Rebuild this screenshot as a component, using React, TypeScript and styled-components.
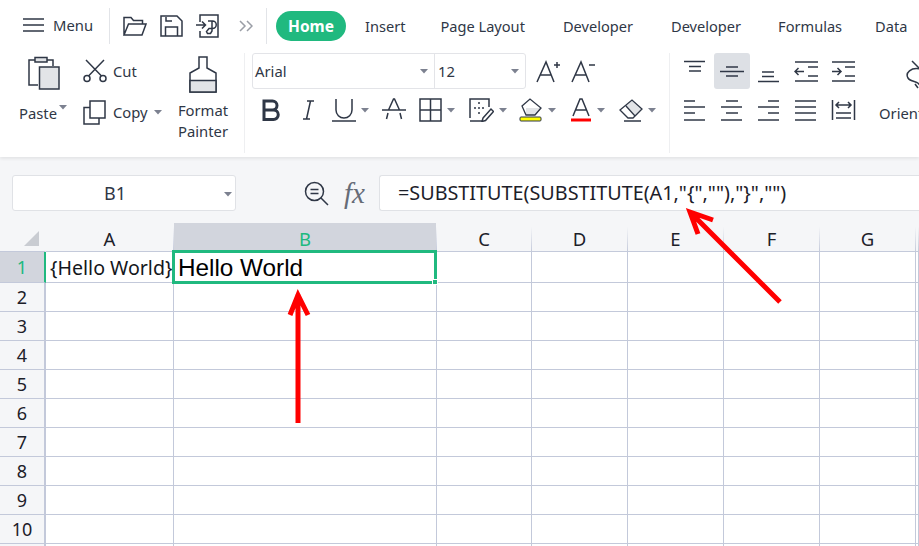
import React from 'react'
import styled, { createGlobalStyle } from 'styled-components'

const ink = '#2f3746'
const green = '#20b97f'
const gridLine = '#c3c9da'

const GlobalStyle = createGlobalStyle`
  html, body {
    margin: 0;
    padding: 0;
    width: 919px;
    height: 546px;
    overflow: hidden;
    background: #fff;
    font-family: "Noto Sans", "Open Sans", sans-serif;
    color: ${ink};
  }
`

const Page = styled.div`
  position: relative;
  width: 919px;
  height: 546px;
  overflow: hidden;
  background: #f5f6f8;
`

/* top menu row */
const TopBar = styled.div`
  display: flex;
  align-items: center;
  height: 53px;
  padding-bottom: 2px;
  box-sizing: border-box;
  background: #fff;
  white-space: nowrap;
`

const MenuButton = styled.div`
  display: flex;
  align-items: center;
  gap: 9px;
  width: 86px;
  padding: 0 0 1px 23px;
  font-size: 14.8px;
`

const BarDivider = styled.div`
  width: 1px;
  height: 36px;
  background: #e2e4e8;
`

const QuickTools = styled.div`
  display: flex;
  align-items: center;
  gap: 13px;
  width: 143px;
  padding-left: 13px;
`

const MoreIcon = styled.div`
  margin-left: 6px;
`

const HomeTab = styled.div`
  display: flex;
  align-items: center;
  justify-content: center;
  width: 70px;
  height: 30px;
  margin-left: 9px;
  border-radius: 15px;
  background: ${green};
  color: #fff;
  font-weight: 700;
  font-size: 15.5px;
`

const Tab = styled.div<{ $gap: number }>`
  margin-left: ${({ $gap }) => $gap}px;
  font-size: 14.6px;
`

/* ribbon */
const Ribbon = styled.div`
  display: flex;
  height: 104px;
  background: #fff;
  box-shadow: 0 2px 3px rgba(0, 0, 0, 0.07);
  overflow: hidden;
  white-space: nowrap;
  font-size: 14.8px;
  position: relative;
`

const ClipboardGroup = styled.div`
  display: grid;
  grid-template-columns: 83px 93px 54px;
  width: 244px;
  height: 100px;
  flex: none;
  border-right: 1px solid #eeeff1;
`

const PasteColumn = styled.div`
  display: flex;
  flex-direction: column;
  padding: 3px 0 0 19px;
`

const PasteIconWrap = styled.div`
  height: 44px;
  padding-left: 8px;
`

const LabelRow = styled.div`
  display: flex;
  align-items: center;
  gap: 4px;
  height: 26px;
`

const RaisedCaret = styled.div`
  margin: -11px 0 0 -2px;
`

const SmallColumn = styled.div`
  display: flex;
  flex-direction: column;
  gap: 15px;
  padding-top: 5px;
`

const SmallRow = styled.div`
  display: flex;
  align-items: center;
  gap: 6px;
  height: 26px;
`

const SmallIconBox = styled.div`
  width: 24px;
  height: 26px;
  display: flex;
  align-items: center;
`

const PainterColumn = styled.div`
  display: flex;
  flex-direction: column;
  align-items: center;
  padding-top: 3px;
  line-height: 21px;
  text-align: center;
`

const PainterLabel = styled.div`
  margin-top: 7px;
`

const FontGroup = styled.div`
  width: 417px;
  height: 100px;
  flex: none;
  margin-left: 7px;
  border-right: 1px solid #eeeff1;
`

const FontTop = styled.div`
  display: flex;
  align-items: center;
  height: 36px;
`

const FontSelects = styled.div`
  display: flex;
  width: 274px;
  height: 36px;
  box-sizing: border-box;
  border: 1px solid #e3e4e8;
  border-radius: 3px;
`

const SelectPart = styled.div<{ $width: number; $divided?: boolean }>`
  display: flex;
  align-items: center;
  justify-content: space-between;
  box-sizing: border-box;
  width: ${({ $width }) => $width}px;
  padding: 0 6px 0 ${({ $divided }) => ($divided ? 3 : 2)}px;
  border-left: ${({ $divided }) => ($divided ? '1px solid #e3e4e8' : 'none')};
`

const SizeButtons = styled.div`
  display: flex;
  align-items: center;
  gap: 11px;
  margin-left: 10px;
`

const FontTools = styled.div`
  display: flex;
  align-items: center;
  height: 28px;
  margin-top: 7px;
`

const Tool = styled.div<{ $left: number }>`
  display: flex;
  align-items: center;
  gap: 5px;
  margin-left: ${({ $left }) => $left}px;
`

const AlignGroup = styled.div`
  display: grid;
  grid-template-columns: repeat(5, 36px);
  grid-auto-rows: 36px;
  column-gap: 1px;
  row-gap: 3px;
  flex: none;
  width: 184px;
  margin-left: 7px;
`

const AlignCell = styled.div<{ $active?: boolean }>`
  display: flex;
  align-items: center;
  justify-content: center;
  border-radius: 3px;
  background: ${({ $active }) => ($active ? '#dde0e5' : 'transparent')};
`

const OrientColumn = styled.div`
  display: flex;
  flex-direction: column;
  flex: none;
  padding: 5px 0 0 18px;
`

const OrientIcon = styled.div`
  height: 42px;
  padding-left: 26px;
`

/* formula bar */
const FormulaBar = styled.div`
  display: flex;
  align-items: center;
  height: 66px;
  padding: 18px 0 12px 12px;
  box-sizing: border-box;
`

const NameBox = styled.div`
  position: relative;
  display: flex;
  align-items: center;
  justify-content: center;
  box-sizing: border-box;
  width: 224px;
  height: 36px;
  padding-right: 18px;
  flex: none;
  background: #fff;
  border: 1px solid #e0e2e6;
  border-radius: 3px;
  font-size: 18px;
`

const NameCaret = styled.div`
  position: absolute;
  right: 3px;
  top: 16px;
`

const FormulaTools = styled.div`
  display: flex;
  align-items: center;
  width: 143px;
  padding-left: 68px;
  box-sizing: border-box;
  flex: none;
`

const FxLabel = styled.span`
  margin-left: 15px;
  font-family: "Liberation Serif", serif;
  font-style: italic;
  font-size: 29px;
  line-height: 30px;
  color: #666c77;
`

const FormulaInput = styled.div`
  flex: 1;
  height: 36px;
  box-sizing: border-box;
  padding-left: 18px;
  background: #fff;
  border: 1px solid #e0e2e6;
  border-right: none;
  border-radius: 3px 0 0 3px;
  font-size: 19.8px;
  line-height: 33px;
  color: #1c2029;
  white-space: nowrap;
`

/* sheet */
const Sheet = styled.div`
  display: grid;
  grid-template-columns: 46px 128px 263px 95px repeat(4, 96px) 1fr;
  grid-template-rows: 29px 31px repeat(9, 29px) 10px;
  background: #fff;
`

const Corner = styled.div`
  background: #f5f6f8;
  display: flex;
  align-items: flex-end;
  justify-content: flex-end;
  padding: 0 6px 5px 0;
  border-right: 1px solid transparent;
  border-bottom: 1px solid ${gridLine};
`

const ColHead = styled.div<{ $selected?: boolean }>`
  display: flex;
  align-items: center;
  justify-content: center;
  box-sizing: border-box;
  font-size: 18.5px;
  padding-top: 3px;
  background: ${({ $selected }) => ($selected ? '#d2d5dd' : '#f5f6f8')};
  color: ${({ $selected }) => ($selected ? green : '#1c2029')};
  border-bottom: 1px solid ${gridLine};
  border-right: 1px solid transparent;
  border-image: linear-gradient(to bottom, #f5f6f8 15%, ${gridLine} 100%) 1;
  border-bottom-style: solid;
`

const RowHead = styled.div<{ $selected?: boolean }>`
  display: flex;
  align-items: center;
  justify-content: center;
  box-sizing: border-box;
  font-size: 18px;
  background: ${({ $selected }) => ($selected ? '#d2d5dd' : '#f5f6f8')};
  color: ${({ $selected }) => ($selected ? green : '#1c2029')};
  border-right: 2px solid ${({ $selected }) => ($selected ? green : gridLine)};
  border-bottom: 1px solid ${gridLine};
`

const Cell = styled.div`
  box-sizing: border-box;
  border-right: 1px solid ${gridLine};
  border-bottom: 1px solid ${gridLine};
  background: #fff;
  overflow: visible;
  white-space: nowrap;
`

const TextCell = styled(Cell)`
  font-size: 19.6px;
  line-height: 32px;
  padding-left: 4px;
  color: #14171c;
`

const SelectedCell = styled.div`
  position: relative;
  box-sizing: border-box;
  margin: -2px 0 -1px -2px;
  border: 3px solid ${green};
  font-family: "Liberation Sans", Arial, sans-serif;
  font-size: 24.3px;
  line-height: 29px;
  padding-left: 3px;
  color: #000;
  background: #fff;
  white-space: nowrap;
`

const FillHandle = styled.div`
  position: absolute;
  right: -4px;
  bottom: -4px;
  width: 4px;
  height: 4px;
  background: ${green};
  border: 1px solid #fff;
`

const ArrowLayer = styled.svg`
  position: absolute;
  left: 0;
  top: 0;
  width: 919px;
  height: 546px;
  pointer-events: none;
`

/* icons */
const Svg = styled.svg`
  display: block;
  flex: none;
  fill: none;
  stroke: ${ink};
  stroke-width: 1.5;
`

const CaretSvg = styled.svg`
  display: block;
  flex: none;
`

const Caret = () => (
  <CaretSvg width="8" height="5" viewBox="0 0 8 5">
    <path d="M0 0h8L4 4.500z" fill="#7c8190" />
  </CaretSvg>
)

const Icon = ({ w, h, children }: { w: number; h: number; children: React.ReactNode }) => (
  <Svg width={w} height={h} viewBox={`0 0 ${w} ${h}`}>
    {children}
  </Svg>
)

const alignRows: { lines: [number, number, number][]; active?: boolean; extra?: string }[] = [
  { lines: [[1, 22, 2.5], [6, 18, 7.5], [6, 18, 12]] },
  { lines: [[0, 24, 12.5], [6, 18, 8], [6, 18, 17]], active: true },
  { lines: [[5, 17, 13], [5, 17, 17.5], [1, 22, 22.5]] },
  { lines: [[1, 24, 3], [14, 24, 8], [14, 24, 17], [1, 24, 22]], extra: 'M1 12.500h9M4.500 9L1 12.500 4.500 16' },
  { lines: [[1, 24, 3], [14, 24, 8], [14, 24, 17], [1, 24, 22]], extra: 'M1 12.500h9M6.500 9L10 12.500 6.500 16' },
  { lines: [[1, 12, 3], [1, 22, 9], [1, 12, 15], [1, 22, 22]] },
  { lines: [[6, 18, 3], [1, 22, 9], [6, 18, 15], [1, 22, 22]] },
  { lines: [[11, 22, 3], [1, 22, 9], [11, 22, 15], [1, 22, 22]] },
  { lines: [[1, 22, 3], [1, 22, 9], [1, 22, 15], [1, 22, 22]] }
]

export default function App() {
  return (
    <Page>
      <GlobalStyle />
      <TopBar>
        <MenuButton>
          <Icon w={21} h={16}>
            <path d="M0 2h21M0 8h21M0 14h21" />
          </Icon>
          Menu
        </MenuButton>
        <BarDivider />
        <QuickTools>
          <Icon w={24} h={22}>
            <path d="M1 20V2.500h7l2.500 3h9V9M1 20h18l4-11H5.500z" />
          </Icon>
          <Icon w={23} h={22}>
            <path d="M1 1h16l5 5v15H1zM5.500 21v-9h12v9M6 2v4h6" />
          </Icon>
          <Icon w={24} h={24}>
            <path d="M4 8V1h18v22H4v-6M0 11h9M6 7.500l3.500 3.500L6 14.500M12 7h4.500a3.300 3.300 0 0 1 0 7.500H13l-2.500 3 1 2h3l1.500-2.500V7" />
          </Icon>
          <MoreIcon>
            <Icon w={14} h={12}>
              <path d="M1 1l5 5-5 5M8 1l5 5-5 5" stroke="#9a9ea6" />
            </Icon>
          </MoreIcon>
        </QuickTools>
        <BarDivider />
        <HomeTab>Home</HomeTab>
        <Tab $gap={19}>Insert</Tab>
        <Tab $gap={35}>Page Layout</Tab>
        <Tab $gap={38}>Developer</Tab>
        <Tab $gap={38}>Developer</Tab>
        <Tab $gap={37}>Formulas</Tab>
        <Tab $gap={33}>Data</Tab>
      </TopBar>

      <Ribbon>
        <ClipboardGroup>
          <PasteColumn>
            <PasteIconWrap>
              <Icon w={33} h={35}>
                <path d="M11 29H2V4h6M20 4h6v6" />
                <path d="M8 1.500h12v4.500H8z" fill="#e2e4e7" />
                <path d="M12.500 11h19.500v22H12.500z" fill="#e2e4e7" />
              </Icon>
            </PasteIconWrap>
            <LabelRow>
              Paste
              <RaisedCaret>
                <Caret />
              </RaisedCaret>
            </LabelRow>
          </PasteColumn>
          <SmallColumn>
            <SmallRow>
              <SmallIconBox>
                <Icon w={24} h={24}>
                  <circle cx="4" cy="19.500" r="3" />
                  <circle cx="20" cy="19.500" r="3" />
                  <path d="M5.500 17L21 1M18.500 17L3 1" />
                </Icon>
              </SmallIconBox>
              Cut
            </SmallRow>
            <SmallRow>
              <SmallIconBox>
                <Icon w={23} h={25}>
                  <path d="M7 18h15V1H7zM7 7.500H1V24h15v-6" />
                </Icon>
              </SmallIconBox>
              Copy
              <Caret />
            </SmallRow>
          </SmallColumn>
          <PainterColumn>
            <Icon w={28} h={37}>
              <path d="M10 1h8v11l9 5v19H1V17l9-5z" />
              <path d="M1 24.500h26V36H1z" fill="#e2e4e7" />
            </Icon>
            <PainterLabel>
              Format
              <br />
              Painter
            </PainterLabel>
          </PainterColumn>
        </ClipboardGroup>

        <FontGroup>
          <FontTop>
            <FontSelects>
              <SelectPart $width={181}>
                Arial
                <Caret />
              </SelectPart>
              <SelectPart $width={91} $divided>
                12
                <Caret />
              </SelectPart>
            </FontSelects>
            <SizeButtons>
              <Icon w={24} h={24}>
                <path d="M1 23L10 3l8 20M4 16h11M18 6h6M21 3v6" />
              </Icon>
              <Icon w={24} h={24}>
                <path d="M1 23L10 3l8 20M4 16h11M18 6h6" />
              </Icon>
            </SizeButtons>
          </FontTop>
          <FontTools>
            <Tool $left={10}>
              <Icon w={18} h={22}>
                <path d="M2 2h8.500a4.500 4.500 0 0 1 0 9H2zM2 11h9.500a4.700 4.700 0 0 1 0 9.500H2z" strokeWidth="3" />
              </Icon>
            </Tool>
            <Tool $left={22}>
              <Icon w={13} h={22}>
                <path d="M5 2h7M8.500 2L4.500 20M1 20h7" />
              </Icon>
            </Tool>
            <Tool $left={17}>
              <Icon w={24} h={24}>
                <path d="M4 1v11a8 8 0 0 0 16 0V1M0 23h24" />
              </Icon>
              <Caret />
            </Tool>
            <Tool $left={13}>
              <Icon w={24} h={24}>
                <path d="M0 12h24M6.500 12L11.500 1h1l5 11M6 15l-1.500 6M18 15l1.500 6" />
              </Icon>
            </Tool>
            <Tool $left={13}>
              <Icon w={23} h={24}>
                <path d="M1 1h21v22H1zM11.500 1v22M1 12h21" />
              </Icon>
              <Caret />
            </Tool>
            <Tool $left={14}>
              <Icon w={25} h={24}>
                <path d="M20 9V1H1v19M1 23h13M10 4v2M10 9v2M5 10h2M10 14v2M13 10h2" />
                <path d="M14 20l8-9 2.500 2.500-8 9-3.500 1z" />
              </Icon>
              <Caret />
            </Tool>
            <Tool $left={12}>
              <Icon w={24} h={24}>
                <path d="M7 10h15l-6 7H7z" fill="#e2e4e7" stroke="none" />
                <path d="M3 8l8-7 11 9-6 7H7z" strokeWidth="1.300" />
                <rect x="1" y="19" width="21" height="4" rx="1" fill="#ffff00" strokeWidth="1" />
              </Icon>
              <Caret />
            </Tool>
            <Tool $left={14}>
              <Icon w={22} h={24}>
                <path d="M3 18L10 1h2l7 17M6 12h10" />
                <path d="M1 22h20" stroke="#ff0000" strokeWidth="3" />
              </Icon>
              <Caret />
            </Tool>
            <Tool $left={14}>
              <Icon w={24} h={24}>
                <path d="M13 2l10 9-6 7-10-10z" fill="#e2e4e7" stroke="none" />
                <path d="M1 12L13 2l10 9-9 9H9zM7 8l9 10M5 23h17" strokeWidth="1.300" />
              </Icon>
              <Caret />
            </Tool>
          </FontTools>
        </FontGroup>

        <AlignGroup>
          {alignRows.map((item, i) => (
            <AlignCell key={i} $active={item.active}>
              <Icon w={24} h={24}>
                {item.lines.map(([x1, x2, y]) => (
                  <path key={`${x1}-${y}`} d={`M${x1} ${y}H${x2}`} />
                ))}
                {item.extra && <path d={item.extra} />}
              </Icon>
            </AlignCell>
          ))}
          <AlignCell>
            <Icon w={25} h={24}>
              <path d="M1.500 2v20M23.500 2v20M5 7h15M8 4L5 7l3 3M17 4l3 3-3 3M5 15h15M5 20h15" />
            </Icon>
          </AlignCell>
        </AlignGroup>

        <OrientColumn>
          <OrientIcon>
            <Icon w={24} h={32}>
              <path d="M7 3l8 8M15 11C6 9 0 15 3 20s11 2 12 8M10 26l3 4" />
            </Icon>
          </OrientIcon>
          <LabelRow>Orientation</LabelRow>
        </OrientColumn>
      </Ribbon>

      <FormulaBar>
        <NameBox>
          B1
          <NameCaret>
            <Caret />
          </NameCaret>
        </NameBox>
        <FormulaTools>
          <Icon w={25} h={25}>
            <circle cx="10.500" cy="10.500" r="9" />
            <path d="M6.500 8.500h8M6.500 12.500h8M17 17l7 7" />
          </Icon>
          <FxLabel>fx</FxLabel>
        </FormulaTools>
        <FormulaInput>=SUBSTITUTE(SUBSTITUTE(A1,"{'{'}",""),"{'}'}","")</FormulaInput>
      </FormulaBar>

      <Sheet>
        <Corner>
          <svg width="15" height="15" viewBox="0 0 15 15">
            <path d="M15 0v15H0z" fill="#c9ccd2" />
          </svg>
        </Corner>
        {['A', 'B', 'C', 'D', 'E', 'F', 'G', ''].map((c) => (
          <ColHead key={c} $selected={c === 'B'}>
            {c}
          </ColHead>
        ))}
        {[1, 2, 3, 4, 5, 6, 7, 8, 9, 10, 11].map((row) => (
          <React.Fragment key={row}>
            <RowHead $selected={row === 1}>{row < 11 ? row : ''}</RowHead>
            {row === 1 ? <TextCell>{'{Hello World}'}</TextCell> : <Cell />}
            {row === 1 ? (
              <SelectedCell>
                Hello World
                <FillHandle />
              </SelectedCell>
            ) : (
              <Cell />
            )}
            {[0, 1, 2, 3, 4, 5].map((c) => (
              <Cell key={c} />
            ))}
          </React.Fragment>
        ))}
      </Sheet>

      <ArrowLayer viewBox="0 0 919 546">
        <g fill="none" stroke="#ff0000" strokeWidth="5">
          <path d="M780 302L691 213M698 234L690 212L713 220" />
          <path d="M298 423V294M290 315L298 295L308 315" />
        </g>
      </ArrowLayer>
    </Page>
  )
}
